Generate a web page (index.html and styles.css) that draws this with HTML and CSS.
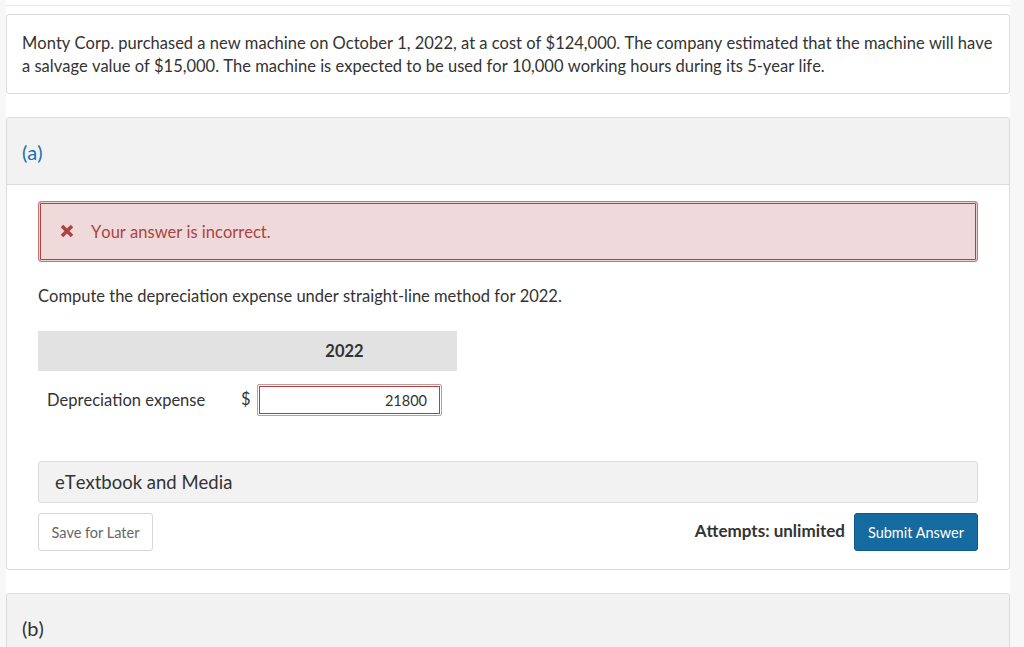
FILE: index.html
```html
<!DOCTYPE html>
<html>
<head>
<meta charset="utf-8">
<link rel="stylesheet" href="styles.css">
</head>
<body>
<div class="page">
  <div class="topline"></div>
  <div class="card intro">
    <p>Monty Corp. purchased a new machine on October 1, 2022, at a cost of $124,000. The company estimated that the machine will have a salvage value of $15,000. The machine is expected to be used for 10,000 working hours during its 5-year life.</p>
  </div>

  <div class="card part">
    <div class="part-head"><span class="part-label blue">(a)</span></div>
    <div class="part-body">
      <div class="alert">
        <svg class="x-icon" width="14" height="14" viewBox="0 0 14 14"><path d="M2 2 L12 12 M12 2 L2 12" stroke="#a94442" stroke-width="3.6" stroke-linecap="butt"/></svg>
        <span>Your answer is incorrect.</span>
      </div>
      <p class="question">Compute the depreciation expense under straight-line method for 2022.</p>
      <div class="table">
        <div class="thead">
          <div class="th-label"></div>
          <div class="th-year">2022</div>
        </div>
        <div class="trow">
          <div class="td-label">Depreciation expense</div>
          <div class="td-cur">$</div>
          <div class="td-input"><div class="input">21800</div></div>
        </div>
      </div>
      <div class="etext">eTextbook and Media</div>
      <div class="actions">
        <button class="btn-save">Save for Later</button>
        <div class="right">
          <span class="attempts">Attempts: unlimited</span>
          <button class="btn-submit">Submit Answer</button>
        </div>
      </div>
    </div>
  </div>

  <div class="card part partb">
    <div class="part-head"><span class="part-label">(b)</span></div>
  </div>
</div>
</body>
</html>
```

FILE: styles.css
```css
html, body {
  margin: 0;
  padding: 0;
  background: #f7f7f7;
  height: 100%;
  overflow: hidden;
}
body {
  font-family: Lato, "Liberation Sans", sans-serif;
  color: #333;
  font-kerning: none;
}
.page {
  margin-left: 6px;
  width: 1004px;
  background: #fff;
  min-height: 647px;
}
.topline {
  height: 5px;
  border-bottom: 1px solid #e6e6e6;
}
.card {
  border: 1px solid #dcdcdc;
  border-radius: 3px;
  background: #fff;
}
.intro {
  margin-top: 8px;
  padding: 17px 15px 15px 15px;
}
.intro p {
  margin: 0;
  font-size: 16.5px;
  line-height: 23px;
}
.part {
  margin-top: 23px;
  overflow: hidden;
}
.part-head {
  background: #f2f2f2;
  height: 67px;
  border-bottom: 1px solid #dcdcdc;
  display: flex;
  align-items: center;
  padding-left: 15px;
  box-sizing: border-box;
  padding-top: 2px;
}
.part-label {
  font-size: 20px;
}
.blue { color: #1b6fa8; }
.part-body {
  padding: 16px 31px 18px 31px;
}
.alert {
  height: 59px;
  border: 1px solid #c07878;
  border-radius: 3px;
  box-shadow: inset 0 0 0 1px #ecd3d3, inset 0 0 0 2px #a94442;
  background: #efd9da;
  display: flex;
  align-items: center;
  padding-left: 21px;
  color: #a94442;
  font-size: 16.5px;
}
.x-icon { margin-right: 17px; margin-top: -1px; }
.question {
  margin: 23px 0 0 0;
  font-size: 16.5px;
  line-height: 22px;
}
.table {
  margin-top: 24px;
  width: 419px;
}
.thead {
  background: #e2e2e2;
  height: 40px;
  display: flex;
  align-items: center;
}
.th-label { width: 194px; }
.th-year {
  width: 225px;
  text-align: center;
  font-weight: bold;
  font-size: 16.5px;
}
.trow {
  display: flex;
  align-items: center;
  height: 58px;
}
.td-label {
  width: 203px;
  padding-left: 9px;
  box-sizing: border-box;
  font-size: 16.5px;
}
.td-cur {
  width: 16px;
  font-size: 16.5px;
  margin-top: -3px;
}
.input {
  box-sizing: border-box;
  height: 32px;
  width: 185px;
  border: 1px solid #c99;
  border-radius: 2px;
  box-shadow: inset 0 0 0 1px #fff, inset 0 0 0 2px #a94442;
  font-size: 14.5px;
  text-align: right;
  line-height: 31px;
  padding-right: 14px;
}
.etext {
  margin-top: 32px;
  height: 40px;
  background: #f2f2f2;
  border: 1px solid #dcdcdc;
  border-radius: 3px;
  display: flex;
  align-items: center;
  padding-left: 16px;
  font-size: 18.5px;
}
.actions {
  margin-top: 10px;
  display: flex;
  justify-content: space-between;
  align-items: center;
}
.btn-save {
  font-family: inherit;
  background: #fff;
  border: 1px solid #d6d6d6;
  border-radius: 3px;
  height: 38px;
  width: 115px;
  font-size: 14.5px;
  color: #666;
  padding: 0;
}
.right {
  display: flex;
  align-items: center;
}
.attempts {
  font-weight: bold;
  font-size: 17px;
  margin-right: 9px;
  margin-top: -3px;
}
.btn-submit {
  font-family: inherit;
  background: #156a9f;
  border: 1px solid #0f5a88;
  border-radius: 3px;
  height: 38px;
  width: 124px;
  font-size: 14.5px;
  color: #fff;
  padding: 0;
}
.partb {
  margin-top: 23px;
}
```
